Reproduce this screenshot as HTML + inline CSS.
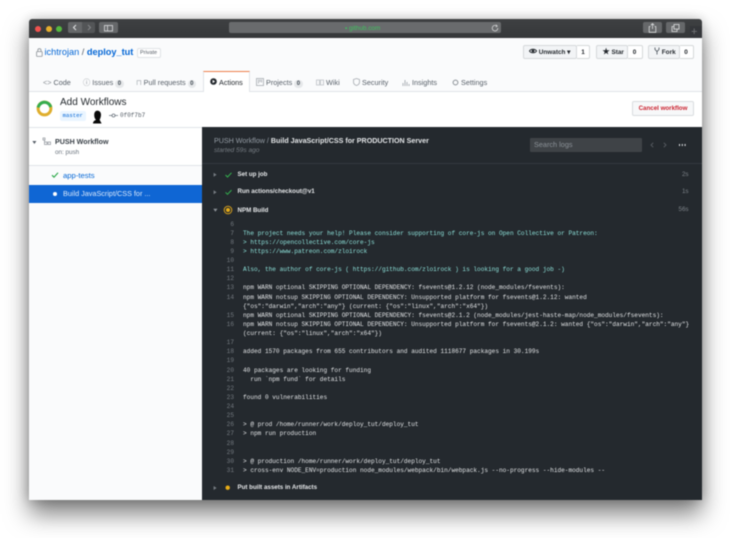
<!DOCTYPE html>
<html><head><meta charset="utf-8">
<style>
html,body{margin:0;padding:0;width:730px;height:538px;overflow:hidden;background:#fff}
body{font-family:"Liberation Sans",sans-serif;position:relative}
.a{position:absolute;white-space:pre}
#win{position:absolute;left:28.5px;top:19px;width:673.5px;height:481px;background:#fff;box-shadow:0 14px 24px rgba(0,0,0,.5),0 0 12px rgba(0,0,0,.22);overflow:hidden;border-radius:3px 3px 0 0}
#pg{position:absolute;left:0;top:0;width:730px;height:538px;filter:blur(.4px)}
.tb{position:absolute;height:11px;background:#66686a;border-radius:2px;top:22px}
.dot{position:absolute;width:6px;height:6px;border-radius:50%;top:26px}
.tab{position:absolute;top:78px;font-size:7.25px;color:#586069;white-space:pre}
.cnt{display:inline-block;background:#e6e8ea;color:#444d56;border-radius:6px;font-size:6px;line-height:8px;padding:0 2.5px;font-weight:bold;margin-left:2px}
.btn{position:absolute;top:44.5px;height:14px;border:.6px solid #d5d8da;border-radius:2px;background:#f2f4f6;box-sizing:border-box;font-size:6.4px;font-weight:bold;color:#24292e;line-height:13px;white-space:pre}
.num{position:absolute;top:44.5px;height:14px;border:.6px solid #d5d8da;border-left:0;border-radius:0 2px 2px 0;background:#fff;box-sizing:border-box;font-size:6.4px;font-weight:bold;color:#24292e;line-height:13px;text-align:center}
#log{position:absolute;left:202px;top:219.6px;width:490px;font-family:"Liberation Mono",monospace;font-size:6.1px;line-height:9.13px;color:#e3e5e7}
#log div{height:9.13px;position:relative;padding-left:41px;white-space:pre}
#log i{position:absolute;left:16px;width:16px;text-align:right;font-style:normal;color:#747a80}
#log .c{color:#8ce0d8}
.st{position:absolute;font-size:6.2px;font-weight:bold;color:#e6e8ea;white-space:pre}
.tm{position:absolute;font-size:6.2px;color:#7d8389;right:41px;white-space:pre}
</style></head>
<body>
<div id="pg">
<div id="win"></div>
<!-- title bar -->
<div class="a" style="left:28.5px;top:19px;width:673.5px;height:19px;background:linear-gradient(#3e4042,#36383a);border-radius:3px 3px 0 0"></div>
<div class="a" style="left:28.5px;top:37.5px;width:673.5px;height:1px;background:#2a2c2e"></div>
<div class="dot" style="left:35px;background:#f0524f"></div>
<div class="dot" style="left:45.5px;background:#e5ae2e"></div>
<div class="dot" style="left:55.5px;background:#55b83f"></div>
<div class="tb" style="left:68px;width:13.5px;border-radius:2px 0 0 2px"></div>
<div class="tb" style="left:82px;width:12.5px;border-radius:0 2px 2px 0;background:#535557"></div>
<svg class="a" style="left:68px;top:22px" width="28" height="11" fill="none" stroke-width="1"><path d="M8 3L5.5 5.5 8 8" stroke="#e4e5e6"/><path d="M20 3l2.5 2.5L20 8" stroke="#85878a"/></svg>
<div class="tb" style="left:99px;width:19px"></div>
<svg class="a" style="left:104px;top:24.5px" width="10" height="7" fill="none" stroke="#dcdddf" stroke-width=".8"><rect x=".5" y=".5" width="8" height="5.5"/><path d="M3.5 .5v5.5"/></svg>
<div class="tb" style="left:229px;width:272px;background:#696b6d"></div>
<div class="a" style="left:345px;top:24.5px;font-size:6.4px;line-height:8px;color:#3fc05e">▪ github.com</div>
<svg class="a" style="left:491px;top:24px" width="8" height="8" fill="none" stroke="#d4d5d6" stroke-width=".8"><path d="M6 2.2A2.8 2.8 0 1 0 6.8 4"/><path d="M5 .8l1.2 1.4L4.8 3"/></svg>
<div class="tb" style="left:643px;width:19px"></div>
<svg class="a" style="left:648px;top:23px" width="9" height="10" fill="none" stroke="#dedfe0" stroke-width=".8"><path d="M2.5 3.5H1.2v5.8h6.6V3.5H6.5M4.5 6V.8M2.9 2.2L4.5.6l1.6 1.6"/></svg>
<div class="tb" style="left:666px;width:19px"></div>
<svg class="a" style="left:671px;top:24px" width="9" height="8" fill="none" stroke="#dedfe0" stroke-width=".8"><rect x="3" y=".5" width="5" height="4.6"/><path d="M3 2.5H1v5h5V5"/></svg>
<div class="a" style="left:690px;top:26px;width:12px;height:12px;background:#34363a"></div>
<div class="a" style="left:691px;top:24.5px;font-size:11px;line-height:14px;color:#75777a">+</div>

<!-- repo header -->
<div class="a" style="left:29px;top:38px;width:673px;height:54px;background:#fafbfc"></div>
<div class="a" style="left:29px;top:91.3px;width:673px;height:.7px;background:#e1e4e8"></div>
<svg class="a" style="left:36px;top:48px" width="7" height="9" fill="none" stroke="#8b9197" stroke-width=".8"><rect x=".6" y="3.6" width="5.6" height="4.8" rx=".5"/><path d="M1.8 3.6V2.3a1.6 1.6 0 0 1 3.2 0v1.3"/></svg>
<div class="a" style="left:44.5px;top:46.5px;font-size:9.2px;line-height:11px;color:#0366d6">ichtrojan <span style="color:#586069">/</span> <b>deploy_tut</b></div>
<div class="a" style="left:136.5px;top:48px;width:24px;height:10px;border:.6px solid #dfe2e5;border-radius:2px;box-sizing:border-box;background:#fff;font-size:5.5px;line-height:9px;color:#586069;text-align:center">Private</div>

<div class="btn" style="left:523px;width:54px;padding-left:5px"><svg width="8" height="6" style="vertical-align:-.5px" fill="none" stroke="#24292e"><path d="M.4 3C2 .6 6 .6 7.6 3 6 5.4 2 5.4.4 3z"/><circle cx="4" cy="3" r=".9" fill="#24292e"/></svg> Unwatch ▾</div>
<div class="num" style="left:577px;width:13px">1</div>
<div class="btn" style="left:595.5px;width:32px;padding-left:6px"><span style="font-size:8px;line-height:8px">★</span> Star</div>
<div class="num" style="left:627.5px;width:15px">0</div>
<div class="btn" style="left:647.5px;width:32px;padding-left:5.5px"><svg width="6" height="8" style="vertical-align:-1px" fill="none" stroke="#444d56" stroke-width=".8"><path d="M1 .5v2l2 2 2-2v-2M3 4.5V7.5"/></svg> Fork</div>
<div class="num" style="left:679.5px;width:14px">0</div>

<!-- tabs -->
<div class="a" style="left:203px;top:71px;width:47px;height:21.5px;background:#fff;border:.7px solid #e1e4e8;border-bottom:0;border-top:1.5px solid #ef7f4c;box-sizing:border-box"></div>
<div class="tab" style="left:43px"><span style="color:#8b9197">&lt;&gt;</span> Code</div>
<div class="tab" style="left:83px"><span style="color:#8b9197">ⓘ</span> Issues<span class="cnt">0</span></div>
<div class="tab" style="left:136px"><span style="color:#a5aab0">⊓</span> Pull requests<span class="cnt">0</span></div>
<svg class="a" style="left:210px;top:77.5px" width="7" height="7"><circle cx="3.5" cy="3.5" r="3.3" fill="#24292e"/><path d="M2.6 1.9L5.1 3.5 2.6 5.1z" fill="#fff"/></svg>
<div class="tab" style="left:219px;color:#24292e">Actions</div>
<div class="tab" style="left:256px"><svg width="8" height="8" style="vertical-align:-1px" fill="none" stroke="#a5aab0" stroke-width=".8"><rect x=".5" y=".5" width="7" height="7"/><path d="M2.5 1.5v4M4 1.5v2.5M5.6 1.5v3"/></svg> Projects<span class="cnt">0</span></div>
<div class="tab" style="left:316px"><svg width="8" height="7" style="vertical-align:-.5px" fill="none" stroke="#bcc0c4" stroke-width=".8"><path d="M.5 1h3v5h-3zM4.5 1h3v5h-3z"/></svg> Wiki</div>
<div class="tab" style="left:353px"><svg width="7" height="8" style="vertical-align:-1px" fill="none" stroke="#a5aab0" stroke-width=".8"><path d="M3.5.5L6.5 1.5v2.5c0 2-1.5 3-3 3.5-1.5-.5-3-1.5-3-3.5V1.5z"/></svg> Security</div>
<div class="tab" style="left:402px"><svg width="8" height="7" style="vertical-align:-.5px" fill="none" stroke="#a5aab0" stroke-width=".9"><path d="M1 7V4M3 7V1M5 7V3M7 7V5"/></svg> Insights</div>
<div class="tab" style="left:452px"><svg width="7" height="7" style="vertical-align:-.5px" fill="none" stroke="#8b9197" stroke-width="1"><circle cx="3.5" cy="3.5" r="2.4"/></svg> Settings</div>

<!-- run header -->
<div class="a" style="left:29px;top:92px;width:673px;height:35px;background:#fff"></div>
<svg class="a" style="left:36px;top:100px" width="17" height="17" fill="none" stroke-width="3"><circle cx="8.5" cy="8.5" r="6.4" stroke="#dfae2d"/><path d="M2.2 7.5a6.4 6.4 0 0 1 12.500-.4" stroke="#36ad4e"/></svg>
<div class="a" style="left:60px;top:96px;font-size:10px;line-height:13px;color:#24292e">Add Workflows</div>
<div class="a" style="left:60px;top:111px;width:25.5px;height:10px;background:#eaf5ff;border-radius:2px;font-family:'Liberation Mono',monospace;font-size:5.6px;line-height:10px;color:#0366d6;text-align:center">master</div>
<svg class="a" style="left:91px;top:109.5px" width="13" height="14"><path d="M2 13.5c0-2 1.6-3.2 3-3.6C3.8 8.8 3.2 7 3.2 5 3.2 2 4.6.6 6.4.6s3.6 1.4 3.6 4c0 2.2-.8 4.2-1.4 5.2l2 3.7z" fill="#0a0a0a"/></svg>
<svg class="a" style="left:109px;top:113px" width="9" height="5" fill="none" stroke="#6a737d" stroke-width=".8"><circle cx="4.5" cy="2.5" r="1.5"/><path d="M0 2.5h3M6 2.5h3"/></svg>
<div class="a" style="left:120px;top:112px;font-family:'Liberation Mono',monospace;font-size:6px;line-height:8px;color:#586069">0f0f7b7</div>
<div class="a" style="left:632px;top:101px;width:62px;height:15px;border:.6px solid #d9dcdf;border-radius:2px;background:#f7f8f9;box-sizing:border-box;font-size:6.2px;font-weight:bold;line-height:14px;color:#cb2431;text-align:center">Cancel workflow</div>

<!-- sidebar -->
<div class="a" style="left:29px;top:127px;width:173px;height:373px;background:#fafbfc"></div>
<div class="a" style="left:29px;top:127px;width:173px;height:.7px;background:#e1e4e8"></div>
<div class="a" style="left:29px;top:128px;width:173px;height:37.5px;background:#fff"></div>
<div class="a" style="left:29px;top:165.3px;width:173px;height:.7px;background:#e1e4e8"></div>
<svg class="a" style="left:32px;top:140px" width="5" height="5"><path d="M.4 1h4L2.4 4z" fill="#586069"/></svg>
<svg class="a" style="left:42px;top:137px" width="10" height="10" fill="none" stroke="#8b9197" stroke-width=".7"><rect x="1" y="1" width="2" height="2"/><rect x="2.5" y="5" width="2.500" height="2.500"/><rect x="6" y="5" width="2.500" height="2.500"/><path d="M2.500 3v2"/></svg>
<div class="a" style="left:55px;top:138px;font-size:7.1px;font-weight:bold;line-height:9px;color:#383f46">PUSH Workflow</div>
<div class="a" style="left:55px;top:149px;font-size:6.3px;line-height:7px;color:#6a737d">on: push</div>
<svg class="a" style="left:51px;top:171px" width="8" height="8" fill="none" stroke="#28a745" stroke-width="1.1"><path d="M1 4.2L3 6.200 7 1.800"/></svg>
<div class="a" style="left:63px;top:170.500px;font-size:7.7px;line-height:9px;color:#0366d6">app-tests</div>
<div class="a" style="left:28.5px;top:184.5px;width:173.5px;height:18.5px;background:#0f66d4"></div>
<div class="a" style="left:53px;top:192px;width:4px;height:4px;border-radius:50%;background:#fff"></div>
<div class="a" style="left:63px;top:189px;font-size:7.25px;line-height:9px;color:#dbe9fb">Build JavaScript/CSS for ...</div>

<!-- main dark -->
<div class="a" style="left:202px;top:127px;width:500px;height:373px;background:#24292e"></div>
<div class="a" style="left:202px;top:163.3px;width:500px;height:.7px;background:#33393f"></div>
<div class="a" style="left:214px;top:136.5px;font-size:7.13px;line-height:9px;color:#959da5">PUSH Workflow / <b style="color:#e4e6e8">Build JavaScript/CSS for PRODUCTION Server</b></div>
<div class="a" style="left:214px;top:146.5px;font-size:6.6px;line-height:8px;font-style:italic;color:#767c82">started 59s ago</div>
<div class="a" style="left:530px;top:138px;width:112px;height:14px;background:#3f4347;border-radius:1px;font-size:7.3px;line-height:14px;color:#8b9197;padding-left:4px;box-sizing:border-box">Search logs</div>
<svg class="a" style="left:648px;top:141px" width="22" height="8" fill="none" stroke="#5c6268" stroke-width=".8"><path d="M5.200 1.800L3 4l2.200 2.200M15.800 1.800L18 4l-2.200 2.200"/></svg>
<div class="a" style="left:678.5px;top:144.2px;width:1.6px;height:1.6px;background:#e6e8ea;box-shadow:2.800px 0 #e6e8ea,5.600px 0 #e6e8ea"></div>

<!-- steps -->
<svg class="a" style="left:213px;top:172px" width="24" height="60">
<path d="M.6 .8l3 2-3 2zM.6 18.2l3 2-3 2z" fill="#767c82"/><path d="M.3 36.800h4.200l-2.100 3z" fill="#8b9197"/>
<g fill="none" stroke="#34b04e" stroke-width="1"><path d="M12.500 3l2 2 4-4.200M12.500 20.300l2 2 4-4.200"/></g>
</svg>
<div class="st" style="left:237.5px;top:170px;line-height:9px">Set up job</div>
<div class="st" style="left:237.5px;top:187.3px;line-height:9px">Run actions/checkout@v1</div>
<div class="st" style="left:237.5px;top:206px;line-height:9px">NPM Build</div>
<div class="tm" style="top:170px;line-height:9px;right:41.5px">2s</div>
<div class="tm" style="top:187px;line-height:9px;right:41.5px">1s</div>
<div class="tm" style="top:205px;line-height:9px;right:41.5px">56s</div>
<svg class="a" style="left:223px;top:205px" width="10" height="10"><circle cx="5" cy="5" r="3.8" fill="none" stroke="#d9a21e" stroke-width="1"/><circle cx="5" cy="5" r="2" fill="#e8ad17"/></svg>

<div id="log">
<div><i>6</i></div>
<div class="c"><i>7</i>The project needs your help! Please consider supporting of core-js on Open Collective or Patreon:</div>
<div class="c"><i>8</i>&gt; https://opencollective.com/core-js</div>
<div class="c"><i>9</i>&gt; https://www.patreon.com/zloirock</div>
<div><i>10</i></div>
<div class="c"><i>11</i>Also, the author of core-js ( https://github.com/zloirock ) is looking for a good job -)</div>
<div><i>12</i></div>
<div><i>13</i>npm WARN optional SKIPPING OPTIONAL DEPENDENCY: fsevents@1.2.12 (node_modules/fsevents):</div>
<div><i>14</i>npm WARN notsup SKIPPING OPTIONAL DEPENDENCY: Unsupported platform for fsevents@1.2.12: wanted</div>
<div>{"os":"darwin","arch":"any"} (current: {"os":"linux","arch":"x64"})</div>
<div><i>15</i>npm WARN optional SKIPPING OPTIONAL DEPENDENCY: fsevents@2.1.2 (node_modules/jest-haste-map/node_modules/fsevents):</div>
<div><i>16</i>npm WARN notsup SKIPPING OPTIONAL DEPENDENCY: Unsupported platform for fsevents@2.1.2: wanted {"os":"darwin","arch":"any"}</div>
<div>(current: {"os":"linux","arch":"x64"})</div>
<div><i>17</i></div>
<div><i>18</i>added 1570 packages from 655 contributors and audited 1118677 packages in 30.199s</div>
<div><i>19</i></div>
<div><i>20</i>40 packages are looking for funding</div>
<div><i>21</i>  run `npm fund` for details</div>
<div><i>22</i></div>
<div><i>23</i>found 0 vulnerabilities</div>
<div><i>24</i></div>
<div><i>25</i></div>
<div><i>26</i>&gt; @ prod /home/runner/work/deploy_tut/deploy_tut</div>
<div><i>27</i>&gt; npm run production</div>
<div><i>28</i></div>
<div><i>29</i></div>
<div><i>30</i>&gt; @ production /home/runner/work/deploy_tut/deploy_tut</div>
<div><i>31</i>&gt; cross-env NODE_ENV=production node_modules/webpack/bin/webpack.js --no-progress --hide-modules --</div>
</div>
<svg class="a" style="left:213px;top:484px" width="20" height="8"><path d="M.6 2l3 2-3 2z" fill="#767c82"/><circle cx="14.7" cy="3.7" r="2.2" fill="#e8ad17"/></svg>
<div class="st" style="left:237.5px;top:483px;line-height:9px">Put built assets in Artifacts</div>
</div>
</body></html>
